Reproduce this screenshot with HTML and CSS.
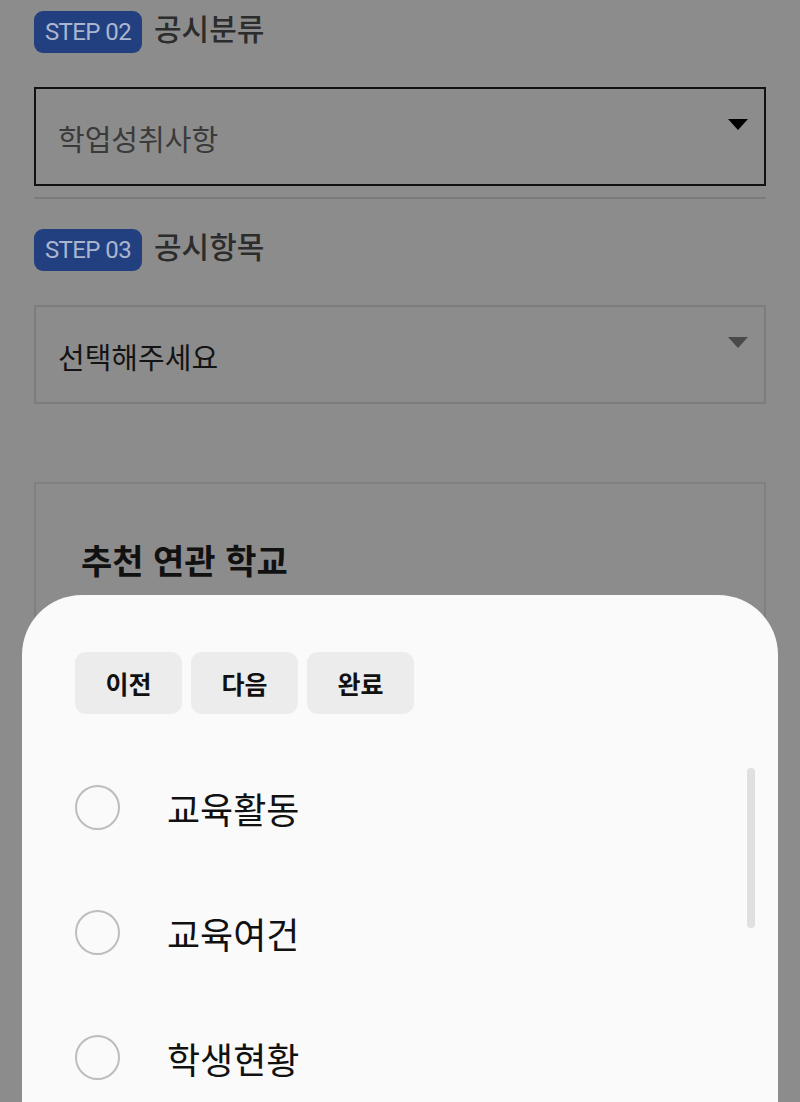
FILE: index.html
```html
<!DOCTYPE html>
<html lang="ko">
<head>
<meta charset="utf-8">
<link rel="stylesheet" href="styles.css">
</head>
<body>
<div class="page">
  <div class="step">
    <span class="badge">STEP 02</span>
    <span class="step-title">공시분류</span>
  </div>
  <div class="select active">
    <span class="select-text">학업성취사항</span>
    <svg class="arrow" width="20" height="12" viewBox="0 0 20 12"><path d="M0 0H20L10 11Z" fill="#000"/></svg>
  </div>
  <div class="divider"></div>
  <div class="step">
    <span class="badge">STEP 03</span>
    <span class="step-title">공시항목</span>
  </div>
  <div class="select">
    <span class="select-text dark">선택해주세요</span>
    <svg class="arrow" width="20" height="12" viewBox="0 0 20 12"><path d="M0 0H20L10 11Z" fill="#4a4a4a"/></svg>
  </div>
  <div class="card">
    <h2 class="card-title">추천 연관 학교</h2>
  </div>
</div>

<div class="sheet">
  <div class="actions">
    <button class="btn">이전</button>
    <button class="btn">다음</button>
    <button class="btn">완료</button>
  </div>
  <ul class="options">
    <li class="option"><span class="radio"></span><span class="label">교육활동</span></li>
    <li class="option"><span class="radio"></span><span class="label">교육여건</span></li>
    <li class="option"><span class="radio"></span><span class="label">학생현황</span></li>
  </ul>
  <div class="scrollbar"></div>
</div>
</body>
</html>
```

FILE: styles.css
```css
* { box-sizing: border-box; }
html, body {
  margin: 0;
  padding: 0;
}
body {
  width: 800px;
  height: 1102px;
  overflow: hidden;
  background: #8c8c8c;
  font-family: "Noto Sans CJK KR", "Noto Sans", sans-serif;
  position: relative;
}
.page {
  padding: 11px 34px 0 34px;
  display: flex;
  flex-direction: column;
}
.step {
  display: flex;
  align-items: center;
  gap: 12px;
  height: 42px;
}
.badge {
  display: flex;
  align-items: center;
  justify-content: center;
  width: 108px;
  height: 42px;
  border-radius: 9px;
  background: #22407f;
  color: #aab6d0;
  font-family: Roboto, "Liberation Sans", sans-serif;
  font-size: 24px;
  letter-spacing: -0.6px;
}
.step-title {
  font-size: 30px;
  color: #2c2c2c;
  font-weight: 500;
  line-height: 1;
  margin-top: -10px;
}
.select {
  margin-top: 34px;
  height: 99px;
  border: 2px solid #7d7d7d;
  display: flex;
  align-items: center;
  justify-content: space-between;
  padding: 0 16px 0 22px;
}
.select.active {
  border-color: #111;
}
.select-text {
  font-size: 29px;
  color: #3a3a3a;
  margin-top: 2px;
}
.select-text.dark { color: #141414; }
.arrow {
  margin-bottom: 24px;
}
.divider {
  height: 2px;
  background: #7b7b7b;
  margin-top: 11px;
  margin-bottom: 30px;
}
.card {
  margin-top: 78px;
  height: 600px;
  border: 2px solid #808080;
  padding: 56px 45px;
}
.card-title {
  margin: 0;
  font-size: 34px;
  font-weight: 700;
  color: #111;
  line-height: 1.2;
}
.sheet {
  position: absolute;
  left: 22px;
  top: 595px;
  width: 756px;
  bottom: 0;
  background: #fafafa;
  border-radius: 60px 60px 0 0;
  padding: 57px 0 0 53px;
  overflow: hidden;
}
.actions {
  display: flex;
  gap: 9px;
}
.btn {
  width: 107px;
  height: 62px;
  border: none;
  border-radius: 11px;
  background: #ececec;
  font-family: "Noto Sans CJK KR", sans-serif;
  font-size: 25px;
  font-weight: 700;
  color: #111;
  padding: 0;
}
.options {
  list-style: none;
  margin: 0;
  padding: 0;
  margin-top: 31px;
}
.option {
  height: 125px;
  display: flex;
  align-items: center;
}
.radio {
  width: 45px;
  height: 45px;
  border-radius: 50%;
  border: 2px solid #bdbdbd;
  flex: none;
}
.label {
  margin-left: 47px;
  font-size: 36px;
  color: #111;
  line-height: 1;
}
.scrollbar {
  position: absolute;
  left: 725px;
  top: 173px;
  width: 8px;
  height: 160px;
  border-radius: 4px;
  background: #e0e0e0;
}
```
